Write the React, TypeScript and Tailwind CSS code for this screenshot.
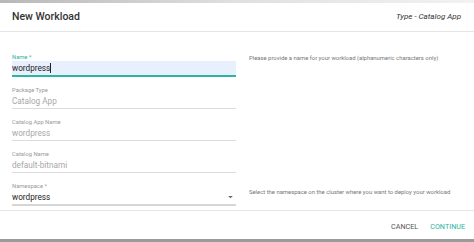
import React from "react";

function Field({ label, value, active, dim, select }: { label: string; value: string; active?: boolean; dim?: boolean; select?: boolean }) {
  return (
    <div className="flex flex-col">
      <div className={`text-[5.8px] leading-[8px] ${active ? "text-[#2bb4a0]" : "text-[#9a9a9a]"}`}>{label}</div>
      <div className={`relative flex items-center h-[14px] text-[8.2px] ${active ? "bg-[#e8f0fe] text-[#222]" : dim ? "text-[#a8a8a8]" : "text-[#222]"}`}>
        <span className={active ? "border-r border-[#222] leading-[10px]" : ""}>{value}</span>
        {select && (
          <svg className="absolute right-[3px] top-[6px]" width="5" height="3" viewBox="0 0 6 4">
            <path d="M0 0 L6 0 L3 3 Z" fill="#666" />
          </svg>
        )}
      </div>
      <div className={active ? "h-[2px] bg-[#2bb4a0]" : select ? "h-[2px] bg-[#d6d6d6]" : "h-px bg-[#dcdcdc]"} />
    </div>
  );
}

export default function App() {
  return (
    <div className="w-[474px] h-[242px] bg-white flex flex-col overflow-hidden" style={{ fontFamily: "Roboto, 'Noto Sans', sans-serif" }}>
      <div className="h-[3px] bg-gradient-to-r from-[#b8b8b8] via-[#e0e0e0] to-[#f2f2f2]" />
      <div className="h-[29px] flex items-center justify-between pl-[12px] pr-[13px] border-b border-[#e6e6e6]">
        <div className="text-[10.5px] font-medium text-[#333]">New Workload</div>
        <div className="text-[8px] italic text-[#333]">Type - Catalog App</div>
      </div>
      <div className="flex pt-[21px] pl-[12px] h-[178px]">
        <div className="w-[224px] flex flex-col gap-[9px]">
          <Field label="Name *" value="wordpress" active />
          <Field label="Package Type" value="Catalog App" dim />
          <Field label="Catalog App Name" value="wordpress" dim />
          <Field label="Catalog Name" value="default-bitnami" dim />
          <Field label="Namespace *" value="wordpress" select />
        </div>
        <div className="flex flex-col pl-[13px] text-[5.9px] text-[#777]">
          <div className="mt-[1px]">Please provide a name for your workload (alphanumeric characters only)</div>
          <div className="mt-[125px]">Select the namespace on the cluster where you want to deploy your workload</div>
        </div>
      </div>
      <div className="h-px bg-[#e6e6e6]" />
      <div className="flex-1 flex items-center justify-end gap-[12px] pr-[9px] pt-[4px] text-[7.2px]">
        <span className="text-[#555]">CANCEL</span>
        <span className="text-[#2bb4a0]">CONTINUE</span>
      </div>
      <div className="h-[3px] bg-[#9a9a9a]" />
    </div>
  );
}
